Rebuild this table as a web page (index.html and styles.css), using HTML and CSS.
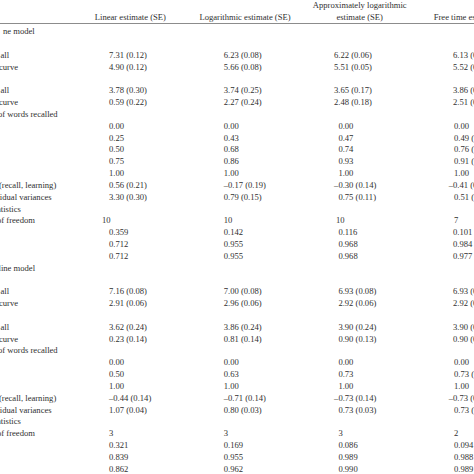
FILE: index.html
```html
<!DOCTYPE html>
<html>
<head>
<meta charset="utf-8">
<link rel="stylesheet" href="styles.css">
</head>
<body>
<div class="table">
  <div class="head">
    <div></div>
    <div class="h">Linear estimate (SE)</div>
    <div class="h">Logarithmic estimate (SE)</div>
    <div class="h">Approximately logarithmic<br>estimate (SE)</div>
    <div class="h">Free time estimate (SE)</div>
  </div>
  <div class="body">
    <div class="row"><div class="lab l-grp">ne model</div></div>
    <div class="row"></div>
    <div class="row"><div class="lab l-all">all</div><div class="c">7.31 (0.12)</div><div class="c">6.23 (0.08)</div><div class="c c3a">6.22 (0.06)</div><div class="c">6.13 (0.06)</div></div>
    <div class="row"><div class="lab l-curve">curve</div><div class="c">4.90 (0.12)</div><div class="c">5.66 (0.08)</div><div class="c c3a">5.51 (0.05)</div><div class="c">5.52 (0.05)</div></div>
    <div class="row"></div>
    <div class="row"><div class="lab l-all">all</div><div class="c">3.78 (0.30)</div><div class="c">3.74 (0.25)</div><div class="c c3a">3.65 (0.17)</div><div class="c">3.86 (0.17)</div></div>
    <div class="row"><div class="lab l-curve">curve</div><div class="c">0.59 (0.22)</div><div class="c">2.27 (0.24)</div><div class="c c3a">2.48 (0.18)</div><div class="c">2.51 (0.18)</div></div>
    <div class="row"><div class="lab l-of">of words recalled</div></div>
    <div class="row"><div class="lab"></div><div class="c">0.00</div><div class="c">0.00</div><div class="c">0.00</div><div class="c c4b">0.00</div></div>
    <div class="row"><div class="lab"></div><div class="c">0.25</div><div class="c">0.43</div><div class="c">0.47</div><div class="c c4b">0.49 (0.03)</div></div>
    <div class="row"><div class="lab"></div><div class="c">0.50</div><div class="c">0.68</div><div class="c">0.74</div><div class="c c4b">0.76 (0.03)</div></div>
    <div class="row"><div class="lab"></div><div class="c">0.75</div><div class="c">0.86</div><div class="c">0.93</div><div class="c c4b">0.91 (0.02)</div></div>
    <div class="row"><div class="lab"></div><div class="c">1.00</div><div class="c">1.00</div><div class="c">1.00</div><div class="c c4b">1.00</div></div>
    <div class="row"><div class="lab l-paren">(recall, learning)</div><div class="c">0.56 (0.21)</div><div class="c">–0.17 (0.19)</div><div class="c neg">–0.30 (0.14)</div><div class="c neg">–0.41 (0.14)</div></div>
    <div class="row"><div class="lab l-res">sidual variances</div><div class="c">3.30 (0.30)</div><div class="c">0.79 (0.15)</div><div class="c">0.75 (0.11)</div><div class="c c4b">0.51 (0.10)</div></div>
    <div class="row"><div class="lab l-stat">atistics</div></div>
    <div class="row"><div class="lab l-df">of freedom</div><div class="c c1df">10</div><div class="c">10</div><div class="c c3df">10</div><div class="c c4b">7</div></div>
    <div class="row"><div class="lab"></div><div class="c">0.359</div><div class="c">0.142</div><div class="c">0.116</div><div class="c">0.101</div></div>
    <div class="row"><div class="lab"></div><div class="c">0.712</div><div class="c">0.955</div><div class="c">0.968</div><div class="c">0.984</div></div>
    <div class="row"><div class="lab"></div><div class="c">0.712</div><div class="c">0.955</div><div class="c">0.968</div><div class="c">0.977</div></div>
    <div class="row"><div class="lab l-grp2">line model</div></div>
    <div class="row"></div>
    <div class="row"><div class="lab l-all">all</div><div class="c">7.16 (0.08)</div><div class="c">7.00 (0.08)</div><div class="c">6.93 (0.08)</div><div class="c">6.93 (0.08)</div></div>
    <div class="row"><div class="lab l-curve">curve</div><div class="c">2.91 (0.06)</div><div class="c">2.96 (0.06)</div><div class="c">2.92 (0.06)</div><div class="c">2.92 (0.06)</div></div>
    <div class="row"></div>
    <div class="row"><div class="lab l-all">all</div><div class="c">3.62 (0.24)</div><div class="c">3.86 (0.24)</div><div class="c">3.90 (0.24)</div><div class="c">3.90 (0.24)</div></div>
    <div class="row"><div class="lab l-curve">curve</div><div class="c">0.23 (0.14)</div><div class="c">0.81 (0.14)</div><div class="c">0.90 (0.13)</div><div class="c">0.90 (0.13)</div></div>
    <div class="row"><div class="lab l-of">of words recalled</div></div>
    <div class="row"><div class="lab"></div><div class="c">0.00</div><div class="c">0.00</div><div class="c">0.00</div><div class="c c4b">0.00</div></div>
    <div class="row"><div class="lab"></div><div class="c">0.50</div><div class="c">0.63</div><div class="c">0.73</div><div class="c c4b">0.73 (0.02)</div></div>
    <div class="row"><div class="lab"></div><div class="c">1.00</div><div class="c">1.00</div><div class="c">1.00</div><div class="c c4b">1.00</div></div>
    <div class="row"><div class="lab l-paren">(recall, learning)</div><div class="c">–0.44 (0.14)</div><div class="c">–0.71 (0.14)</div><div class="c neg">–0.73 (0.14)</div><div class="c neg">–0.73 (0.14)</div></div>
    <div class="row"><div class="lab l-res">sidual variances</div><div class="c">1.07 (0.04)</div><div class="c">0.80 (0.03)</div><div class="c">0.73 (0.03)</div><div class="c c4b">0.73 (0.03)</div></div>
    <div class="row"><div class="lab l-stat">atistics</div></div>
    <div class="row"><div class="lab l-df">of freedom</div><div class="c">3</div><div class="c">3</div><div class="c">3</div><div class="c c4b">2</div></div>
    <div class="row"><div class="lab"></div><div class="c">0.321</div><div class="c">0.169</div><div class="c">0.086</div><div class="c c4b">0.094</div></div>
    <div class="row"><div class="lab"></div><div class="c">0.839</div><div class="c">0.955</div><div class="c">0.989</div><div class="c c4b">0.988</div></div>
    <div class="row"><div class="lab"></div><div class="c">0.862</div><div class="c">0.962</div><div class="c">0.990</div><div class="c c4b">0.989</div></div>
  </div>
</div>
</body>
</html>
```
FILE: styles.css
```css
html, body {
  margin: 0;
  padding: 0;
  background: #ffffff;
  overflow: hidden;
}
body {
  width: 474px;
  height: 474px;
  font-family: "Liberation Serif", "Times New Roman", serif;
  font-size: 8.6px;
  color: #2f2f2f;
}
.table {
  width: 532px;
}
.head {
  display: grid;
  grid-template-columns: 73px repeat(4, 114.7px);
  line-height: 11.6px;
  height: 23.2px;
  border-bottom: 1px solid #8c8c8c;
}
.head .h {
  text-align: center;
  align-self: end;
  white-space: nowrap;
}
.body {
  padding-top: 1.9px;
}
.row {
  display: grid;
  grid-template-columns: 73px repeat(4, 114.7px);
  height: 11.84px;
  line-height: 11.84px;
}
.lab {
  white-space: nowrap;
  overflow: hidden;
}
.l-grp { padding-left: 3px; }
.l-grp2 { text-indent: -1.5px; }
.l-all { text-indent: 0.5px; }
.l-curve { text-indent: -1px; }
.l-of { text-indent: -2px; }
.l-paren { text-indent: -1px; }
.l-res { text-indent: -3.5px; }
.l-stat { text-indent: -3px; }
.l-df { text-indent: -3px; }
.c {
  padding-left: 36px;
  white-space: nowrap;
}
.c3a { padding-left: 31.6px; }
.c4b { padding-left: 37px; }
.c1df { padding-left: 29px; }
.c3df { padding-left: 33.6px; }
.neg { text-indent: -4.3px; }
```
